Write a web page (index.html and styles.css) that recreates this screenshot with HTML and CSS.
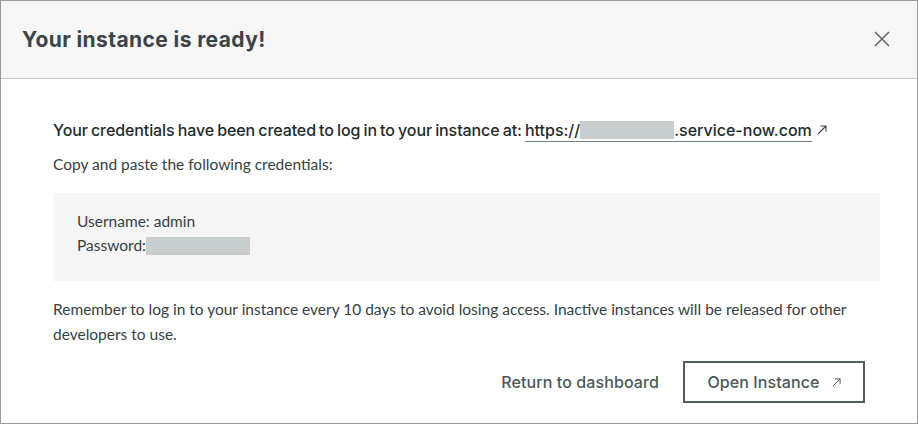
FILE: index.html
```html
<!DOCTYPE html>
<html>
<head>
<meta charset="utf-8">
<link rel="stylesheet" href="styles.css">
</head>
<body>
<div class="modal">
  <div class="modal-header">
    <h1 class="title">Your instance is ready!</h1>
    <button class="close" aria-label="Close">
      <svg width="16" height="16" viewBox="0 0 16 16"><path d="M1 1L15 15M15 1L1 15" stroke="#5b6767" stroke-width="1.5" fill="none"/></svg>
    </button>
  </div>
  <div class="modal-body">
    <p class="lead">Your credentials have been created to log in to your instance at: <a class="link" href="#">https://<span class="redact url-redact"></span>.service-now.com</a><svg class="arrow" width="10" height="10" viewBox="0 0 10 10"><path d="M1 9L9 1M3.5 1H9V6.5" stroke="#3a4646" stroke-width="1.1" fill="none"/></svg></p>
    <p class="text">Copy and paste the following credentials:</p>
    <div class="cred-box">
      <div class="cred">Username: admin</div>
      <div class="cred">Password:<span class="redact pw-redact"></span></div>
    </div>
    <p class="text note">Remember to log in to your instance every 10 days to avoid losing access. Inactive instances will be released for other developers to use.</p>
    <div class="actions">
      <button class="btn-link">Return to dashboard</button>
      <button class="btn-outline">Open Instance<svg class="btn-arrow" width="9" height="9" viewBox="0 0 10 10"><path d="M1 9L9 1M3.5 1H9V6.5" stroke="#4c5858" stroke-width="1.1" fill="none"/></svg></button>
    </div>
  </div>
</div>
</body>
</html>
```
FILE: styles.css
```css
* { box-sizing: border-box; }
html, body { margin: 0; padding: 0; }
body { width: 918px; height: 424px; background: #fff; }
.modal {
  width: 918px;
  height: 424px;
  border: 1px solid #9a9a9a;
  display: flex;
  flex-direction: column;
}
.modal-header {
  height: 78px;
  background: #f6f6f6;
  border-bottom: 1px solid #c9c9c9;
  display: flex;
  align-items: center;
  justify-content: space-between;
  padding: 0 27px 0 21px;
}
.title {
  margin: 0;
  font-family: "Inter", "Lato", sans-serif;
  font-weight: 700;
  font-size: 21px;
  color: #3d4448;
  letter-spacing: 0.4px;
}
.close {
  background: none;
  border: 0;
  padding: 0;
  width: 16px;
  height: 16px;
  display: flex;
  margin-top: -1px;
}
.modal-body {
  padding: 39px 37px 0 52px;
  font-family: "Lato", "Open Sans", sans-serif;
}
.lead {
  margin: 0;
  font-family: "Inter", "Lato", sans-serif;
  font-weight: 500;
  font-size: 16px;
  color: #1f2b2b;
  height: 24px;
  line-height: 24px;
  letter-spacing: -0.1px;
  word-spacing: -1px;
}
.link {
  color: #1f2b2b;
  text-decoration: none;
  border-bottom: 1px solid #6e8383;
  padding-bottom: 1px;
  letter-spacing: 0;
}
.redact {
  display: inline-block;
  background: #c8cdcd;
  vertical-align: middle;
}
.url-redact { width: 94px; height: 18px; vertical-align: -3px; }
.arrow { margin-left: 5px; vertical-align: 1px; }
.text {
  margin: 10px 0 0;
  font-size: 15.5px;
  line-height: 24px;
  color: #37413f;
}
.cred-box {
  margin-top: 17px;
  background: #f5f5f5;
  height: 88px;
  padding: 16px 24px;
}
.cred {
  font-size: 15.5px;
  line-height: 24px;
  color: #37413f;
}
.pw-redact { width: 104px; height: 18px; vertical-align: -4px; }
.note { margin-top: 16px; line-height: 25px; }
.actions {
  display: flex;
  justify-content: flex-end;
  align-items: center;
  gap: 24px;
  margin-top: 14px;
  padding-right: 15px;
}
.btn-link {
  background: none;
  border: 0;
  padding: 0;
  font-family: "Inter", "Lato", sans-serif;
  font-weight: 500;
  font-size: 16px;
  letter-spacing: 0.1px;
  color: #4c5858;
}
.btn-outline {
  width: 182px;
  height: 42px;
  background: #fff;
  border: 2px solid #4f5d5d;
  font-family: "Inter", "Lato", sans-serif;
  font-weight: 500;
  font-size: 16px;
  letter-spacing: 0.1px;
  color: #4c5858;
  padding: 0;
  display: flex;
  align-items: center;
  justify-content: center;
}
.btn-arrow { margin-left: 12px; }
```
